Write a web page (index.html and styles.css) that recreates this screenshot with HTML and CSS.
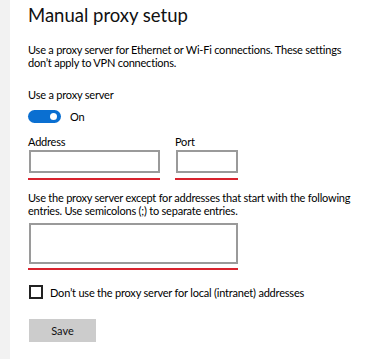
FILE: index.html
```html
<!DOCTYPE html>
<html lang="en">
<head>
    <meta charset="UTF-8" />
    <title>Manual proxy setup</title>
    <link rel="stylesheet" href="styles.css">
</head>
<body>
    <div class="side"></div>
    <div class="page">
        <h1>Manual proxy setup</h1>
        <p class="desc">Use a proxy server for Ethernet or Wi-Fi connections. These settings<br>don’t apply to VPN connections.</p>

        <div class="label">Use a proxy server</div>
        <div class="toggle-row">
            <div class="toggle"><span class="knob"></span></div>
            <span class="toggle-text">On</span>
        </div>

        <div class="fields">
            <div class="field addr">
                <div class="label">Address</div>
                <div class="box"></div>
                <div class="err"></div>
            </div>
            <div class="field port">
                <div class="label">Port</div>
                <div class="box"></div>
                <div class="err"></div>
            </div>
        </div>

        <p class="desc except">Use the proxy server except for addresses that start with the following<br>entries. Use semicolons (;) to separate entries.</p>
        <div class="field wide">
            <div class="box tall"></div>
            <div class="err"></div>
        </div>

        <label class="check-row">
            <span class="check"></span>
            <span>Don’t use the proxy server for local (intranet) addresses</span>
        </label>

        <button class="save">Save</button>
    </div>
</body>
</html>
```

FILE: styles.css
```css
body {
    margin: 0;
    padding: 0;
    background: #fff;
    font-family: Lato, "Noto Sans", sans-serif;
    color: #000;
    display: flex;
    min-height: 359px;
    overflow: hidden;
}

.side {
    width: 10px;
    background: #f2f2f2;
    flex-shrink: 0;
}

.page {
    padding-left: 18px;
    display: flex;
    flex-direction: column;
    align-items: flex-start;
    font-size: 11px;
    letter-spacing: -0.2px;
}

h1 {
    margin: 4px 0 0;
    font-size: 18.5px;
    line-height: 22px;
    font-weight: 400;
    letter-spacing: 0;
    color: #111;
}

.desc {
    margin: 17px 0 0;
    line-height: 13px;
    white-space: nowrap;
    letter-spacing: -0.22px;
}

.label {
    line-height: 13px;
    margin-top: 19px;
}

.toggle-row {
    display: flex;
    align-items: center;
    margin-top: 9px;
}

.toggle {
    width: 33px;
    height: 13px;
    border-radius: 7px;
    background: #0a6fd1;
    position: relative;
}

    .knob {
        position: absolute;
        right: 4px;
        top: 3px;
        width: 7px;
        height: 7px;
        border-radius: 50%;
        background: #fff;
    }

.toggle-text {
    margin-left: 9px;
}

.fields {
    display: flex;
    gap: 15px;
    margin-top: 12px;
}

.field .label {
    margin: 0 0 2px 0;
}

.box {
    margin-left: 1px;
    height: 23px;
    box-sizing: border-box;
    border: 2px solid #9a9a9a;
    background: #fff;
}

.err {
    margin-top: 5px;
    height: 2px;
    background: #d9232e;
}

.addr {
    width: 132px;
}

.port {
    width: 63px;
}

.except {
    margin-top: 11px;
}

.wide {
    width: 210px;
    margin-top: 6px;
}

.tall {
    height: 41px;
}

.wide .err {
    margin-top: 4px;
}

.check-row {
    display: flex;
    align-items: center;
    margin-top: 15px;
    margin-left: 1px;
}

.check {
    width: 14px;
    height: 14px;
    box-sizing: border-box;
    border: 2px solid #222;
    margin-right: 7px;
}

.save {
    margin-top: 20px;
    margin-left: 1px;
    width: 67px;
    height: 23px;
    border: none;
    background: #cccccc;
    font-family: Lato, "Noto Sans", sans-serif;
    font-size: 11px;
    color: #111;
    padding: 0;
}
```
